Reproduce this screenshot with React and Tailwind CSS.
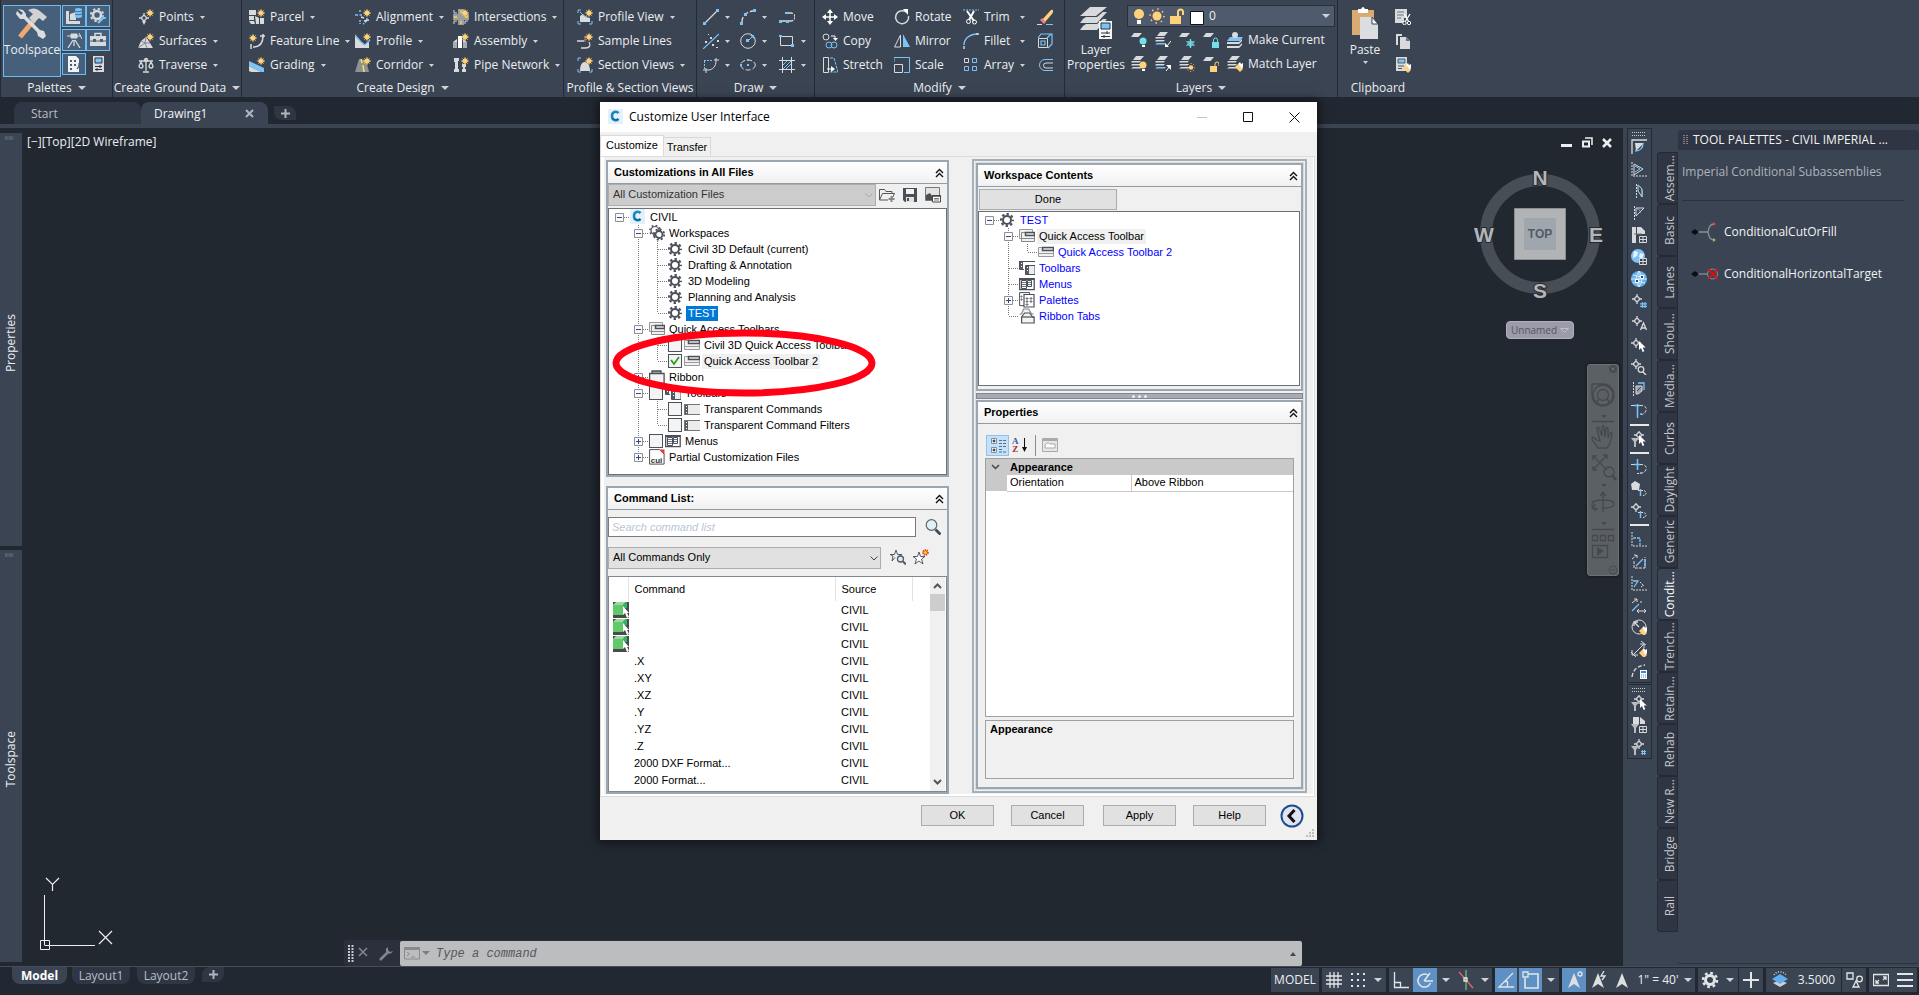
import React from "react";

const G = "#d9dadc";
const B = "#7cc4f8";
const Y = "#ffd27a";
const D = "#4b505a";

function Burst({ x = 12, y = 4 }) {
  return (
    <g transform={`translate(${x} ${y})`} fill={Y}>
      <path d="M0-4.5 1-1.8 3.2-3.2 1.8-1 4.5 0 1.8 1 3.2 3.2 1 1.8 0 4.5-1 1.8-3.2 3.2-1.8 1-4.5 0-1.8-1-3.2-3.2-1-1.8Z" />
    </g>
  );
}
const Cross = ({ x = 6, y = 6 }) => (
  <g transform={`translate(${x} ${y})`} stroke={G} fill="none" strokeWidth="1.3">
    <circle r="2.3" />
    <path d="M0-5v2.7M0 2.3V5M-5 0h2.7M2.3 0H5" />
  </g>
);
const Arrow = ({ x = 8, y = 5 }) => <path transform={`translate(${x} ${y})`} d="M0 0v9l2-2 1.6 4 1.7-.8L3.7 6.500h3Z" fill="#fff" />;
const Funnel = () => <path d="M0 7h8L5 11v5H3v-5Z" fill="#b9bbbf" />;
const Brush = ({ x = 8, y = 8 }) => (
  <g transform={`translate(${x} ${y})`}>
    <path d="M0 3 3 0l5 5-3 3Z" fill={Y} />
    <path d="M3 0 5-2l1 2 2-1v4L7 5Z" fill="#fff" />
  </g>
);
const Table = () => <path d="M8.500 9.500h7v6h-7zM12 9.500v6M8.500 12.500h7" stroke={G} fill="#3b4453" />;
const Sheet = ({ x, y, c = G }) => <path transform={`translate(${x} ${y})`} d="M3 0h8L7.500 4H0Z" fill={c} />;
const Stack = ({ mid = G }) => (
  <g>
    <Sheet x={2} y={0} />
    <path d="M1 5h9l-1.500 1.500H0ZM1 8h9L8.500 9.500H0Z" fill={G} />
    <path d="M2 11h9l-1.500 1.500H0Z" fill={mid} />
  </g>
);

const ICONS = {
  points: (<g><Cross x={6} y={9} /><path d="M4 12l2 4 2-4" fill={G} /><Burst /></g>),
  surfaces: (<g><path d="M0 15 3 8l5-4 4 6 3 5Z" fill={G} /><path d="m3 8 4 2 5 0M7 10l-7 5M7 10l2 5M8 4 7 10" stroke="#6d7480" fill="none" strokeWidth=".8" /><Burst /></g>),
  traverse: (<g fill="none" stroke={G} strokeWidth="1.300"><path d="M8 1v13M1 4h14M5 15h6" /><circle cx="8" cy="3" r="1.500" /><path d="M1 9l2-4 2 4a2 2 0 0 1-4 0ZM11 9l2-4 2 4a2 2 0 0 1-4 0Z" /></g>),
  parcel: (<g><path d="M0 1h7v5H0zM0 7h5v4H0zM6 7l4 2v6H7zM11 9h4v6h-4zM0 12h5l1 3H2z" fill={G} /><Burst /></g>),
  featureLine: (<g><path d="M14 3c0 7-3 11-10 11M11 3h5M2 11v5M14 1v4" stroke={G} fill="none" strokeWidth="1.500" /><Burst x={4} y={5} /></g>),
  grading: (<g><path d="M0 4 15 11v4H12L0 9Z" fill={B} /><path d="M0 9l12 6H2L0 14Z" fill={G} /><Burst /></g>),
  alignment: (<g fill="none" strokeWidth="1.500"><path d="M0 6h3M4.500 6H7" stroke={B} /><path d="M5 1v2M5 11v4M12 9c0 3-2 5-4 6" stroke={B} strokeDasharray="2 1" /><path d="M6 8l3 1M9 12l5-1" stroke={G} /><Burst /></g>),
  profile: (<g><path d="M0 3v12h14V9L9 12 5 8Z" fill={G} /><path d="m0 2 6 7 4 3 5-5" stroke={B} fill="none" strokeWidth="1.300" /><Burst /></g>),
  corridor: (<g><path d="M4 2 0 15h14L11 3Z" fill="#8e9196" /><path d="m6 2 1 4M8 8l1 7" stroke="#ffe24a" strokeWidth="1.500" /><Burst /></g>),
  intersections: (<g><path d="M5 0h6v5h5v6h-5v5H5v-5H0V5h5Z" fill="#9b9da1" /><path d="M8 1v3M8 12v3M1 8h3M12 8h3" stroke="#ffd83b" strokeWidth="1.300" /><path d="M1 1v3h3M12 15v-3h3M1 15v-3h3" stroke={G} fill="none" /><Burst /></g>),
  assembly: (<g><path d="M5 3h4v12H5z" fill="#fff" /><path d="M0 9h4v6H0zM10 9h4v6h-4z" fill="#a8abb0" /><path d="m0 9 4-3v3zM14 9l-4-3v3z" fill={G} /><Burst /></g>),
  pipe: (<g><path d="M1 1h5v3H5v8h1v3H1v-3h1V5H1ZM9 7h4v3h-1v2h1v3H9v-3h1v-2H9Z" fill={G} /><Burst /></g>),
  profileView: (<g><path d="M1 4V1h3M1 12v3h3M15 12v3h-3" stroke={B} fill="none" /><path d="M3 7 6 5l3 3 4 1v4H3Z" fill={G} /><path d="m3 3 4 4 3 1" stroke={B} fill="none" /><Burst /></g>),
  sampleLines: (<g><path d="M0 8h7M4 15h4c5 0 6-3 4-6" stroke={G} fill="none" strokeWidth="1.300" /><path d="M8 3v6" stroke="#ee8484" /><Burst /></g>),
  sectionViews: (<g><path d="M1 4V1h3M1 12v3h3M15 12v3h-3" stroke={B} fill="none" /><path d="M3 14c0-6 2-9 5-9s5 4 5 9Z" fill={G} /><Burst /></g>),
  line: (<g><path d="M2 14 14 2" stroke={G} strokeWidth="1.200" /><path d="M0 13h3v3H0zM13 0h3v3h-3z" fill={B} /></g>),
  arc: (<g><path d="M2 13C2 7 6 3 13 2" stroke={G} fill="none" strokeWidth="1.400" strokeDasharray="5 2" /><path d="M0 13h3v3H0zM4 4h3v3H4zM13 0h3v3h-3z" fill={B} /></g>),
  polyline: (<g><path d="M2 12h8M9 4h3a4 4 0 0 1 0 8h-2" stroke={G} fill="none" strokeWidth="1.300" strokeDasharray="5 1.500" /><path d="M0 11h3v3H0zM7 11h3v3H7zM6 3h3v2H6z" fill={B} /></g>),
  xline: (<g><path d="M0 16 16 1" stroke={B} strokeWidth="1.200" /><path d="M2 8h2v2H2zM7 4h2v2H7zM9 11h2v2H9zM14 7h2v2h-2zM5 1h1v1H5zM13 14h2v1h-2z" fill={G} /></g>),
  circle: (<g><circle cx="8" cy="8" r="7.300" stroke={G} fill="none" /><path d="m8 8 5-5" stroke={B} /><path d="M6 6h3v3H6zM10 2h4v4z" fill={B} /></g>),
  rect: (<g><path d="M1.500 3.500h12v9h-12z" stroke={G} fill="none" /><path d="M0 2h3v2H0zM12 11h3v3h-3z" fill={B} /></g>),
  curve: (<g fill="none"><path d="M1.500 4v9M1 3.500h9" stroke={B} strokeDasharray="2 1" /><path d="M13 1v3c0 5-3 9-8 9H0M11 3h5M3 11v5" stroke={G} /></g>),
  ellipse: (<g><ellipse cx="8" cy="8" rx="7.300" ry="5" stroke={G} fill="none" strokeDasharray="5 2" /><path d="M7 7h2v2H7zM0 7h2v2H0zM7 2h2v2H7z" fill={B} /></g>),
  hatch: (<g fill="none"><path d="M3.500 0v16M12.500 0v16M0 3.500h16M0 12.500h16" stroke={G} /><path d="m4 8 4-4M4 12l8-8M7 12l5-5" stroke={B} /></g>),
  move: (<g stroke="#fff" fill="#fff"><path d="M8 2v12M2 8h12" strokeWidth="1.500" /><path stroke="none" d="m8 0 3 4H5ZM8 16l3-4H5ZM0 8l4-3v6ZM16 8l-4-3v6Z" /></g>),
  copy: (<g fill="none"><circle cx="4" cy="4" r="3" stroke={G} /><circle cx="7" cy="12" r="3" stroke={B} /><circle cx="12" cy="12" r="3" stroke={B} /><path d="M9 3h4v3" stroke="#fff" /><path d="M11 5h5l-2.500 3Z" fill="#fff" /></g>),
  stretch: (<g fill="none"><path d="M1.500.5h5v15h-5z" stroke={G} /><path d="M8 1h4l4 14H8" stroke={B} strokeDasharray="3 1" /><path d="M5 12h5" stroke="#fff" /><path d="m9 9 4 3-4 3z" fill="#fff" /></g>),
  rotate: (<g fill="none"><path d="M12 3a6.500 6.500 0 1 0 2.500 4" stroke={G} strokeWidth="1.500" /><path d="M9 0h5v6z" fill="#fff" /></g>),
  mirror: (<g fill="none"><path d="M6.500 2v12h-6Z" stroke={G} /><path d="M9 1v13h7Z" fill={B} /></g>),
  scale: (<g fill="none"><path d="M0 5V.5h15.500v15H10" stroke={B} /><path d="M.5 7.500h8v8h-8z" stroke={G} /></g>),
  trim: (<g fill="none"><path d="M0 1h16" stroke={B} strokeDasharray="2 1" /><path d="m4 2 7 10M11 2 6 11" stroke="#fff" strokeWidth="2" /><circle cx="5.500" cy="12.500" r="2" stroke="#fff" /><circle cx="11.500" cy="13" r="2" stroke="#fff" /></g>),
  fillet: (<g fill="none"><path d="M15 1C6 1 1 6 1 12" stroke={B} strokeWidth="1.400" /><path d="M1 13v3M13 1h3" stroke={G} strokeWidth="1.400" /></g>),
  array: (<g fill="none"><path d="M1.500 1.500h4v4h-4z" stroke={G} /><path d="M9.500 1.500h4v4h-4zM1.500 9.500h4v4h-4zM9.500 9.500h4v4h-4z" stroke={B} /></g>),
  erase: (<g><path d="m5 11 8-9q2-2 3-1t-1 4l-7 8Z" fill={Y} /><path d="m3 11 2-2 4 4-2 2Z" fill="#ee7d86" /><path d="M0 15.500h5" stroke={G} /><path d="M9 15.500h7" stroke={B} /></g>),
  solid: (<g fill="none"><path d="M1.500 5.500h9v9h-9z" stroke={G} /><path d="m1 5 3-4h11v10l-4 4M10 5l4-4M4 8h4v4H4z" stroke={B} strokeWidth="1.200" /></g>),
  offset: (<g fill="none"><path d="M16 2.500H8a5.500 5.500 0 0 0 0 11h8" stroke={B} /><path d="M16 6H9a2.500 2.500 0 0 0 0 5h7" stroke={G} /></g>),
  layOff: (<g><Sheet x={0} y={1} /><circle cx="12" cy="9" r="3.500" fill="#74dfe8" /><path d="M11 13h3v2h-3z" fill="#fff" /></g>),
  layIso: (<g><Stack mid={B} /><path d="m16 9-4 5" stroke="#fff" /><path d="M10 15v-4l4 4z" fill="#fff" /></g>),
  layFreeze: (<g><Sheet x={0} y={1} /><path d="M11.500 7v9M7.500 9.500l8 4M15.500 9.500l-8 4" stroke="#74dfe8" strokeWidth="1.300" /><circle cx="11.500" cy="11.500" r="2.500" stroke="#74dfe8" fill="none" /></g>),
  layLock: (<g><Sheet x={0} y={1} /><path d="M9 10h7v6H9z" fill="#74dfe8" /><path d="M10.500 10V8a2 2 0 0 1 4 0v2" stroke="#74dfe8" fill="none" /></g>),
  layCurrent: (<g><path d="M3 5h13l-3 4H0Z" fill={B} /><circle cx="8" cy="3" r="3" fill={G} /><path d="M0 10h12l3-3v2l-3 3H0ZM0 14h12l3-3v2l-3 3H0Z" fill={G} /></g>),
  layOn: (<g><Stack /><circle cx="12" cy="9" r="3.500" fill={Y} /><path d="M11 13h3v2h-3z" fill="#fff" /></g>),
  layUniso: (<g><Stack mid={B} /><path d="m11 15 4-5" stroke="#fff" /><path d="M11 9h5v5z" fill="#fff" /></g>),
  layThaw: (<g><Stack /><circle cx="12" cy="11.500" r="2.300" fill={Y} /><circle cx="12" cy="11.500" r="4" stroke={Y} fill="none" strokeDasharray="1 2" /></g>),
  layUnlock: (<g><Sheet x={0} y={1} /><path d="M7 10h7v6H7z" fill={Y} /><path d="M12 10V8a2 2 0 0 1 4 0v2" stroke={Y} fill="none" /></g>),
  layMatch: (<g><Stack /><Brush x={8} y={8} /></g>),
  cut: (<g><path d="M0 0h12v9H9v5H0Z" fill={G} /><path d="M2 3h7M2 6h7M2 9h4" stroke="#6d7480" /><path d="m9 5 5 8M15 5l-5 8" stroke="#fff" strokeWidth="1.300" /><circle cx="9.500" cy="14" r="1.700" stroke="#fff" fill="#3b4453" /><circle cx="14" cy="14" r="1.700" stroke="#fff" fill="#3b4453" /></g>),
  copyDoc: (<g fill={G}><path d="M1 1h6v2H3v9H1Z" /><path d="M5 4h6l4 4v8H5Z" /><path d="M11 4v4h4Z" fill="#6d7480" /></g>),
  pasteSpecial: (<g><path d="M1 0h11v14H1Z" fill={G} /><path d="M3 2h7v4H3z" fill={B} stroke="#333" strokeWidth=".7" /><path d="M3 9h6M3 11.500h4" stroke="#555" /><Brush x={8} y={8} /></g>),
  prospector: (<g><path d="M0 3h3v10h11v3H0ZM4 6l6-2v8H4Z" fill={G} /><path d="M9 1q3-2 7 0v8q-4 2-7 0Z" fill={B} /><path d="M9 3q3 1.500 7 0M9 6q3 1.500 7 0" stroke="#3d6e96" fill="none" /></g>),
  settings: (<g><circle cx="7" cy="7" r="4" stroke={G} strokeWidth="2.500" fill="none" /><circle cx="7" cy="7" r="6.200" stroke={G} strokeWidth="1.800" strokeDasharray="2.400 2.470" fill="none" /><path d="m8 15 6-6" stroke={B} strokeWidth="2.300" /><path d="M12 7h2v2h2v1.500q-2 1-4-.5Z" fill={B} /></g>),
  survey: (<g stroke={G} fill="none"><path d="M7 8 2 16M9 8l5 8M8 8v6" strokeWidth="1.300" /><path d="M5 2h6v4H5z" fill={G} /><path d="M1 4h14M13 1l3 6" /></g>),
  toolbox: (<g><path d="M0 4h16v10H0z" fill={G} /><path d="M5 4V1.500h6V4" stroke={G} strokeWidth="1.500" fill="none" /><path d="M0 9h16" stroke="#46607b" /><path d="M3 7h3v3H3zM10 7h3v3h-3z" fill="#46607b" /></g>),
  panorama: (<g><path d="M2 0h8l3 3v13H2Z" fill="#f2f2f2" /><path d="M4 4h2v2H4zM8 4h2v2H8zM4 8h2v2H4zM8 8h2v2H8zM4 12h2v2H4z" fill="#46607b" /><path d="M13 7v3l-2 3" stroke="#46607b" fill="none" strokeWidth="1.300" /></g>),
  properties: (<g><path d="M3 0h11v16H3Z" fill={G} /><path d="M5 2h7v5H5z" fill={B} stroke="#2b3340" /><path d="M5 10.500h7M5 13.500h7M10 9v3M7 12v3" stroke="#2b3340" /></g>),
  // side toolbar
  s0: (<g fill="none"><path d="M1 15V1h15" stroke={G} strokeWidth="1.300" /><path d="M4 4h9l-8 8z" fill={G} /><path d="M12 4c0 5-3 8-8 8" stroke={B} strokeWidth="1.300" /></g>),
  s1: (<g fill="none"><path d="M1 1v14h15" stroke={G} strokeDasharray="2 1" /><path d="M3 3 12 8 3 14Z" stroke={G} /><path d="m4 5 5 3-5 3" stroke={B} /></g>),
  s2: (<g fill="none"><path d="M5.500 1v14" stroke={G} strokeDasharray="2 1" /><path d="m7 2 4 4v8L7 8Z" stroke={G} /><path d="M7 2c4 2 5 7 4 12" stroke={B} /></g>),
  s3: (<g fill="none"><path d="M3.500 1v14" stroke={G} strokeDasharray="2 1" /><path d="M5 3h8L5 11Z" stroke={G} /><path d="M6 4c2 0 4 2 3 4" stroke={B} /></g>),
  s4: (<g><path d="M1 0h4v16H1zM6 0h4l4 4v3H6z" fill={G} /><path d="M3 7h8" stroke="#6d7480" /><Table /></g>),
  s5: (<g><circle cx="7" cy="7" r="7" fill={B} /><path d="M3 2l4 1-1 4-4 2ZM9 4l4 1-2 5-3-2Z" fill="#e8f4ff" /><Table /></g>),
  s6: (<g><circle cx="8" cy="8" r="8" fill="#5fb4ee" /><path d="M8 0v16M0 8h16M2 4q6 3 12 0M2 12q6-3 12 0M8 0Q2 8 8 16Q14 8 8 0" stroke="#e8f4ff" strokeWidth=".8" fill="none" /><path d="M9.500 4.500h3v3h-3zM4.500 8.500h3v3h-3z" fill="#3b4453" stroke="#fff" /></g>),
  s7: (<g><Cross /><path d="M11.500 9v6M14 9v6M9 10.800h7M9 13.300h7" stroke={B} strokeWidth="1.200" /></g>),
  s8: (<g><Cross /><path d="m9.500 15 3-7 3 7M10.500 13h4" stroke={G} fill="none" strokeWidth="1.300" /></g>),
  s9: (<g><Cross x={5} y={6} /><Arrow x={8} y={4} /></g>),
  s10: (<g><Cross x={5} y={5} /><circle cx="10" cy="10.500" r="2.800" stroke={G} fill="none" strokeWidth="1.300" /><path d="m12 13 3 3" stroke={G} strokeWidth="1.500" /></g>),
  s11: (<g fill="none"><path d="M2.500 1v14" stroke={G} strokeDasharray="2 1" /><path d="M5 5h6v5l-4 3H5z" fill="#9a9ea6" stroke={G} /><path d="M7 2h6v7" stroke={B} strokeWidth="1.300" /><path d="m6 10 4-4" stroke="#3b4453" /></g>),
  s12: (<g fill="none"><path d="M0 2.500h10c4 0 6 2 5 5s-3 4-5 4" stroke={G} strokeDasharray="3 1.500" /><path d="M6.500 1v14M3 2.500h6M9 11h2" stroke={B} strokeWidth="1.500" /></g>),
  s13: (<g><Cross x={8} y={4} /><Funnel /><Arrow x={8} y={4} /></g>),
  s14: (<g fill="none"><path d="M0 5.500h10c4 0 6 2 5 5s-3 4-9 4" stroke={G} strokeDasharray="3 1.500" /><path d="M6.500 0v11M3 5.500h6M11 14h-2" stroke={B} strokeWidth="1.500" /></g>),
  s15: (<g fill="none"><path d="m4 0 5 3-1 6H1L0 3Z" fill={G} /><path d="M7 9.500h5c4 0 4 5 0 5" stroke={G} strokeDasharray="2 1" /><path d="M9.500 8v7" stroke={B} strokeWidth="1.500" /></g>),
  s16: (<g fill="none"><Cross x={5} y={4} /><path d="M7 9.500h5c4 0 4 5 0 5" stroke={G} strokeDasharray="2 1" /><path d="M9.500 8v7" stroke={B} strokeWidth="1.500" /></g>),
  s17: (<g fill="none"><path d="M1 1v14h15" stroke={G} strokeDasharray="2 1" /><path d="M2 7h7v7" stroke={B} strokeDasharray="3 1" strokeWidth="1.300" /></g>),
  s18: (<g fill="none"><path d="m1 6 5-4M6 5V2H3M3 8v7h11V4" stroke={G} strokeDasharray="3 1" /><path d="m5 13 7-7M14 6v8" stroke={B} strokeWidth="1.300" /></g>),
  s19: (<g fill="none"><path d="M1 1v14h15M9 7l4 4M10 12l3-2" stroke={G} strokeDasharray="2 1" /><path d="M2 6h5l-4 6" stroke={B} strokeWidth="1.300" /></g>),
  s20: (<g fill="none"><path d="m1 6 5-4M6 5V2H3M6 14h9M8 12l-2 2 2 2M13 12l2 2-2 2M10 4v2" stroke={G} /><path d="m1 14 7-7" stroke={B} strokeWidth="1.300" /></g>),
  s21: (<g fill="none"><circle cx="8" cy="8" r="7" stroke={G} /><path d="m8 8-4-4M3 7V3h4" stroke={G} strokeWidth="1.300" /><Brush x={8} y={9} /></g>),
  s22: (<g fill="none"><path d="m2 14 11-11M9 3h4v4M1 9v5h6M10 0l5 4M0 11l5 5" stroke={G} /><Brush x={8} y={9} /></g>),
  s23: (<g fill="none"><path d="M1 14C2 7 6 3 14 2" stroke={G} strokeDasharray="4 2" strokeWidth="1.400" /><path d="M9 7h7v9H9z" fill="#fff" /><path d="M10 8h5v2h-5z" fill="#2f8de0" /><path d="M10 12h5M10 14h5" stroke="#2f8de0" strokeDasharray="1 1" /></g>),
  s24: (<g><Cross x={8} y={4} /><Funnel /><Arrow x={9} y={4} /></g>),
  s25: (<g><path d="M2 0h6v7H2zM9 0l5 4v3H9z" fill={G} /><Funnel /><Table /></g>),
  s26: (<g><Cross x={8} y={5} /><Funnel /><path d="M11.500 11v5M13.500 11v5M10 12.500h5M10 14.500h5" stroke={B} /></g>),
  // dialog tree
  civil: (<g><path d="M0 0h15v15H0z" fill="#e3f1fa" /><path d="M10.500 4.200C8.500 1.800 4 2.500 4 7s4.500 5.200 6.500 2.800" stroke="#1f86bd" strokeWidth="2.600" fill="none" /><path d="M4.500 9.500q2 2.500 6 .8" stroke="#11597f" strokeWidth="1.200" fill="none" /></g>),
  gear: (<g fill="none" stroke={D}><circle cx="7" cy="8" r="4" strokeWidth="2" /><circle cx="7" cy="8" r="5.900" strokeWidth="2.200" strokeDasharray="2.400 2.230" strokeDashoffset="1.200" /></g>),
  gears: (<g fill="none" stroke={D}><circle cx="6" cy="5.500" r="4" strokeWidth="1.200" /><circle cx="6" cy="5.500" r="5.200" strokeWidth="1.500" strokeDasharray="1.700 2.380" /><circle cx="10" cy="9.500" r="3.500" strokeWidth="1.800" fill="#fff" /><circle cx="10" cy="9.500" r="5.200" strokeWidth="1.800" strokeDasharray="2.100 1.980" /></g>),
  qats: (<g fill="#f1f1f1" stroke={D} strokeWidth="1"><path d="M.5 1.500h13v9H.5z" stroke="#999" /><path d="M2.500 4.500h13v9h-13z" stroke="#888" /><path d="M6.500 4.500h9v3h-9z" fill="#e4e6e9" strokeWidth="1.500" /><path d="M3 10.500h12" stroke="#888" /></g>),
  qat: (<g fill="#f1f1f1" stroke={D} strokeWidth="1"><path d="M.5 3.500h15v9H.5z" stroke="#999" /><path d="M4.500 3.500h11v3h-11z" fill="#e4e6e9" strokeWidth="1.500" /><path d="M1 9.500h14" stroke="#999" /></g>),
  ribbon: (<g fill="#f3f3f3" stroke={D} strokeWidth="1.300"><path d="M.6 4.500h14.500v10H.6z" /><path d="M3 4V2h9v2" fill="#999" /></g>),
  toolbars: (<g><path d="M.5 1.500H16M.5 1v8.500H5" stroke={D} fill="none" /><path d="M1 2h3v8H1z" fill="#555b64" /><path d="M6.500 5.500H16v9H6.500z" fill="#ececec" stroke={D} /><path d="M7 6h3v8H7z" fill="#555b64" /><path d="M2 3h1v1H2zM2 6h1v1H2zM8 7h1v1H8zM8 10h1v1H8z" fill="#fff" /></g>),
  toolbar: (<g><path d="M.5 3.500H16M.5 13.500H16M.5 3v11" stroke="#777" fill="none" /><path d="M1 4h15v9H1z" fill="#ececec" /><path d="M1 4h3v9H1z" fill="#555b64" /><path d="M2 5h1v1H2zM2 8h1v1H2zM2 11h1v1H2z" fill="#fff" /></g>),
  menus: (<g fill="#fff" stroke={D}><path d="M.7 2.700h14.500v11H.7z" strokeWidth="1.300" /><path d="M.5 3h15" strokeWidth="2" /><path d="M2.500 4.500h5v8h-5zM8.500 4.500h4v6h-4z" /><path d="M3 6.500h4M3 8.500h4M3 10.500h4M9 6.500h3M9 8.500h3" strokeWidth=".8" /></g>),
  palettes: (<g fill="#fff" stroke={D}><path d="M.6.600h10v13H.6z" /><path d="M5 2.500h10v12.500H5z" strokeWidth="1.200" /><path d="M7 6h2v1H7zM11 6h2v1h-2zM7 9h2v1H7zM11 9h2v1h-2zM7 12h2v1H7zM2 4h1v1H2zM2 7h1v1H2z" strokeWidth=".8" /></g>),
  ribbonTabs: (<g fill="#f3f3f3" stroke={D} strokeWidth="1.200"><path d="M.6 6h2l2-5h5l3 5h2" stroke="#888" /><path d="M2.600 9l3-4h5l3 4h1.500v6H2.600z" /><path d="M2.600 9h12.500" /></g>),
  cui: (<g><path d="M.6.600h10l4.500 4.500v10H.6z" fill="#fff" stroke={D} /><path d="M10 .5 15.500 6V.5z" fill="#e23d45" /><text x="7.500" y="13.500" fontSize="8" fontWeight="bold" textAnchor="middle" fill="#333" fontFamily="Liberation Sans">cui</text></g>),
  openAdd: (<g fill="none" stroke="#555"><path d="M.5 13V2.500h5l1.500 2h6V7M.5 13l3-6.500h12l-2 4M.5 13H9" /><path d="M12.500 9v6M9.500 12h6" stroke="#888" strokeWidth="2" /></g>),
  save: (<g><path d="M1 1h14v14H3l-2-2z" fill="#4a4e55" /><path d="M4 2h8v5H4z" fill="#f2f2f2" /><path d="M4 10h8v5H4z" fill="#e2e2e2" /><path d="M5 11h2v3H5z" fill="#4a4e55" /></g>),
  image: (<g><path d="M.5.500h14v13H.5z" fill="#e3e3e3" stroke="#777" /><path d="M1 8l4-2 2 3v4H1z" fill="#4a4e55" /><path d="M7.500 8.500h8v6.500h-8z" fill="#fff" stroke="#444" /><path d="M7 9h9" stroke="#444" strokeWidth="1.500" /><path d="M9 11.500h5M9 13h5" stroke="#555" strokeWidth=".8" /></g>),
  search: (<g><circle cx="6.500" cy="6" r="5.300" fill="#e2f1f5" stroke="#5a6a72" strokeWidth="1.200" /><path d="m10.500 10.500 5 5" stroke="#444b52" strokeWidth="2.800" /></g>),
  starFind: (<g fill="none" stroke="#555b66"><path d="m6 1 1.500 4.500H12L8.500 8M5 8.500 2 12l1-5L0 5.500h4.500L6 1" /><circle cx="10.500" cy="10" r="3" fill="#dfeef2" strokeWidth="1.300" /><path d="m13 12.500 3 3" strokeWidth="2" /></g>),
  starNew: (<g fill="none" stroke="#555b66"><path d="m6 3 1.500 4.500H12L8.500 10l1.500 5-4-3-4 3 1.500-5L0 7.500h4.500z" fill="#fff" /><circle cx="12.500" cy="3.500" r="2.300" stroke="#d9480f" strokeWidth="2" strokeDasharray="1.200 .6" fill="#ffcf33" /></g>),
  cmd: (<g><path d="M0 0h16v16H0z" fill="#4a4a4c" /><path d="M0 3h10v10H0z" fill="#5fca67" /><path d="M0 3 3 0h10l-3 3z" fill="#9bd99f" /><path d="m10 3 3-3h1v6h-4z" fill="#2fb56a" /><path d="M10 4v9l2-2 2 5 2-1-2-4h2z" fill="#fff" /></g>),
  categorized: (<g stroke="#30589a" fill="#fff"><path d="M1.500 1.500h5v5h-5zM1.500 10.500h5v5h-5z" stroke="#7a8fae" /><path d="M4 2.500v3M2.500 4h3M4 11.500v3M2.500 13h3" stroke="#111" /><path d="M9 3.500h3M9 6.500h3M9 9.500h3M9 12.500h3M9 15h3M13 3.500h3M13 6.500h3M13 9.500h3M13 15h3" stroke="#5a6f8f" /></g>),
  pages: (<g fill="#e6e6e6" stroke="#a9a9a9"><path d="M.5 1.500h15v13H.5z" /><path d="M.5 3h15" strokeWidth="2" /><path d="M3 11V8l2-2h2l1 1h5v4z" fill="#fff" /></g>),
};

function Icon({ n, s = 16 }) {
  return (
    <svg width={s} height={s} viewBox="0 0 16 16" className="shrink-0" aria-hidden="true">
      {ICONS[n]}
    </svg>
  );
}

function Caret({ w = 5, className = "" }) {
  return (
    <svg width={w} height={w === 5 ? 3 : 4} viewBox="0 0 8 4" className={`shrink-0 ${className}`} preserveAspectRatio="none" aria-hidden="true">
      <path d="M0 0h8L4 4Z" fill="#cfd2d6" />
    </svg>
  );
}

function Tool({ icon, label, caret, className = "" }) {
  return (
    <button className={`flex h-6 items-center whitespace-nowrap ${className}`} aria-label={label || icon}>
      <Icon n={icon} />
      {label && <span className="ml-[5px]">{label}</span>}
      {caret && <Caret className="ml-[6px]" />}
    </button>
  );
}

function Panel({ title, caret, className, children }) {
  return (
    <section className={`flex flex-none flex-col border-r border-[#252b35] pt-[5px] ${className}`}>
      <div className="flex h-[72px]">{children}</div>
      <h2 className="flex flex-1 items-center justify-center gap-[6px] whitespace-nowrap pt-[2px] font-normal">
        {title}
        {caret && <Caret w={8} />}
      </h2>
    </section>
  );
}

const Col = ({ className = "", children }) => <div className={`flex flex-col ${className}`}>{children}</div>;

function PaletteButton({ icon, on }) {
  return (
    <button aria-label={icon} className={`flex h-[22px] w-6 items-center justify-center border ${on ? "border-[#6cbcf5] bg-[#46607b]" : "border-transparent"}`}>
      <Icon n={icon} />
    </button>
  );
}

function Ribbon() {
  return (
    <header className="flex h-[97px] flex-none overflow-hidden border-l border-[#252b35] bg-[#3b4453] text-[12px] text-[#eceef0]">
      <Panel title="Palettes" caret className="w-[112px]">
        <button className="ml-[2px] flex h-[72px] w-[58px] flex-col items-center border border-[#6cbcf5] bg-[#46607b]">
          <svg width="34" height="34" viewBox="0 0 34 34">
            <path d="m5 31 14-17" stroke="#f2a970" strokeWidth="5" />
            <path d="M13 4q7-4 13 2l6 5-4 4-4-3-5 5-5-5 4-4Z" fill="#d0d2d4" />
            <path d="M3 3l5 1 3 4 0 2 14 14 4 1 2 5-3 3-5-3-1-4L9 13 5 13 1 8l1-3 4 4 2-2Z" fill="#dcdddf" />
          </svg>
          <span className="mt-px">Toolspace</span>
        </button>
        <div className="ml-px grid h-[70px] grid-cols-2 content-between">
          <PaletteButton icon="prospector" on />
          <PaletteButton icon="settings" on />
          <PaletteButton icon="survey" on />
          <PaletteButton icon="toolbox" on />
          <PaletteButton icon="panorama" on />
          <PaletteButton icon="properties" />
        </div>
      </Panel>
      <Panel title="Create Ground Data" caret className="w-[129px]">
        <Col className="pl-[25px]">
          <Tool icon="points" label="Points" caret />
          <Tool icon="surfaces" label="Surfaces" caret />
          <Tool icon="traverse" label="Traverse" caret />
        </Col>
      </Panel>
      <Panel title="Create Design" caret className="w-[322px]">
        <Col className="w-[106px] flex-none pl-[7px]">
          <Tool icon="parcel" label="Parcel" caret />
          <Tool icon="featureLine" label="Feature Line" caret />
          <Tool icon="grading" label="Grading" caret />
        </Col>
        <Col className="w-[98px] flex-none pl-[7px]">
          <Tool icon="alignment" label="Alignment" caret />
          <Tool icon="profile" label="Profile" caret />
          <Tool icon="corridor" label="Corridor" caret />
        </Col>
        <Col className="pl-[7px]">
          <Tool icon="intersections" label="Intersections" caret />
          <Tool icon="assembly" label="Assembly" caret />
          <Tool icon="pipe" label="Pipe Network" caret />
        </Col>
      </Panel>
      <Panel title="Profile & Section Views" className="w-[133px]">
        <Col className="pl-[13px]">
          <Tool icon="profileView" label="Profile View" caret />
          <Tool icon="sampleLines" label="Sample Lines" />
          <Tool icon="sectionViews" label="Section Views" caret />
        </Col>
      </Panel>
      <Panel title="Draw" caret className="w-[118px]">
        <Col className="w-[36px] flex-none pl-[6px]">
          <Tool icon="line" caret />
          <Tool icon="xline" caret />
          <Tool icon="curve" caret />
        </Col>
        <Col className="w-[40px] flex-none pl-[7px]">
          <Tool icon="arc" caret />
          <Tool icon="circle" caret />
          <Tool icon="ellipse" caret />
        </Col>
        <Col className="pl-[6px]">
          <Tool icon="polyline" />
          <Tool icon="rect" caret />
          <Tool icon="hatch" caret />
        </Col>
      </Panel>
      <Panel title="Modify" caret className="w-[250px]">
        <Col className="w-[72px] flex-none pl-[7px]">
          <Tool icon="move" label="Move" />
          <Tool icon="copy" label="Copy" />
          <Tool icon="stretch" label="Stretch" />
        </Col>
        <Col className="w-[70px] flex-none pl-[7px]">
          <Tool icon="rotate" label="Rotate" />
          <Tool icon="mirror" label="Mirror" />
          <Tool icon="scale" label="Scale" />
        </Col>
        <div className="flex w-[73px] flex-none pl-[6px]">
          <Col>
            <Tool icon="trim" label="Trim" />
            <Tool icon="fillet" label="Fillet" />
            <Tool icon="array" label="Array" />
          </Col>
          <Col className="ml-[6px]">
            {["Trim", "Fillet", "Array"].map((t) => (
              <button key={t} aria-label={`${t} options`} className="flex h-6 items-center"><Caret /></button>
            ))}
          </Col>
        </div>
        <Col className="pl-[7px]">
          <Tool icon="erase" />
          <Tool icon="solid" />
          <Tool icon="offset" />
        </Col>
      </Panel>
      <Panel title="Layers" caret className="w-[273px]">
        <button className="flex w-[62px] flex-none flex-col items-center pt-px leading-[15px]">
          <svg width="34" height="34" viewBox="0 0 34 34">
            <path d="M11 1h17L17 10H1Z" fill={G} />
            <path d="m4 13 3-2h11l6-5h4L18 17H1ZM4 20l3-2h11l6-5h4L18 24H1Z" fill={G} />
            <path d="M20 15h13v18H20Z" fill="#f5f5f5" />
            <path d="M22 17h9v6h-9z" fill={B} stroke="#2b3340" />
            <path d="M22 27h9M22 30.500h9M28 25v3M25 29v3" stroke="#2b3340" />
          </svg>
          <span className="mt-[2px]">Layer</span>
          <span>Properties</span>
        </button>
        <div className="flex flex-1 flex-col pr-[2px]">
          <button className="flex h-[22px] items-center border border-[#2a303b] bg-[#4f5a6d] pl-[6px] pr-1" aria-label="Layer control">
            <svg width="70" height="18" viewBox="0 0 70 18">
              <circle cx="5" cy="7" r="5" fill={Y} />
              <path d="M3 13h4v4H3z" fill="#fff" />
              <circle cx="23" cy="9" r="4.500" fill={Y} />
              <circle cx="23" cy="9" r="7" fill="none" stroke={Y} strokeWidth="1.500" strokeDasharray="1.500 4" />
              <path d="M36 9h11v8H36z" fill={Y} />
              <path d="M44 9V5a2.500 2.500 0 0 1 5 0v3" stroke={Y} strokeWidth="2" fill="none" />
              <path d="M56.500 4.500h13v13h-13z" fill="#fff" stroke="#111" />
            </svg>
            <span className="ml-[5px] flex-1 text-left">0</span>
            <Caret w={8} />
          </button>
          <div className="mt-px flex h-6 items-center gap-2 pl-1">
            <Icon n="layOff" /><Icon n="layIso" /><Icon n="layFreeze" /><Icon n="layLock" /><Tool icon="layCurrent" label="Make Current" />
          </div>
          <div className="flex h-6 items-center gap-2 pl-1">
            <Icon n="layOn" /><Icon n="layUniso" /><Icon n="layThaw" /><Icon n="layUnlock" /><Tool icon="layMatch" label="Match Layer" />
          </div>
        </div>
      </Panel>
      <section className="flex flex-none flex-col pt-[5px]">
        <div className="flex h-[72px]">
          <button className="flex w-[54px] flex-col items-center pt-px leading-[15px]">
            <svg width="28" height="34" viewBox="0 0 28 34">
              <path d="M1 4h22v25H1Z" fill="#d9ab72" />
              <path d="M7 3h3q2-4 4 0h3v4H7Z" fill="#fff" />
              <path d="M9 11h12l6 7v15H9Z" fill="#dcdddf" />
              <path d="M21 11v7h6Z" fill="#fff" stroke="#3b4453" />
            </svg>
            <span className="mt-[2px]">Paste</span>
            <Caret className="mt-1" />
          </button>
          <Col className="pl-[3px]">
            <Tool icon="cut" /><Tool icon="copyDoc" /><Tool icon="pasteSpecial" />
          </Col>
        </div>
        <h2 className="flex flex-1 items-center justify-center pl-[7px] pt-[2px] font-normal">Clipboard</h2>
      </section>
    </header>
  );
}

function FileTabs() {
  return (
    <nav className="flex h-[27px] flex-none items-end bg-[#222831] pl-[14px] text-[12px]">
      <button className="flex h-[22px] w-[127px] items-center rounded-t-[8px] bg-[#2f3744] pl-[17px] pt-px text-[#b9bec5]">Start</button>
      <div className="flex h-[22px] w-[127px] items-center rounded-t-[8px] bg-[#3b4453] pl-[13px] pt-px text-[#f2f3f5]">
        <button>Drawing1</button>
        <button aria-label="Close Drawing1" className="ml-auto mr-[14px]">
          <svg width="9" height="9" viewBox="0 0 9 9"><path d="m1 1 7 7M8 1 1 8" stroke="#b2b6bc" strokeWidth="2" /></svg>
        </button>
      </div>
      <button aria-label="New drawing" className="mb-1 ml-[6px] flex h-[14px] w-[22px] items-center justify-center rounded-bl-lg rounded-tr-lg bg-[#2f3744]">
        <svg width="9" height="9" viewBox="0 0 9 9"><path d="M4.500 0v9M0 4.500h9" stroke="#b2b6bc" strokeWidth="2" /></svg>
      </button>
    </nav>
  );
}

const Grip = ({ className = "" }) => (
  <svg width="14" height="4" viewBox="0 0 14 4" className={className} aria-hidden="true">
    <path d="M0 .5h14M0 3.500h14" stroke="#c6c9ce" strokeDasharray="1 1" />
  </svg>
);

function SideBars() {
  return (
    <aside className="flex w-[22px] flex-none flex-col gap-1 bg-[#222831] pb-1 pt-[5px] text-[12px] text-[#eceef0]">
      {["Properties", "Toolspace"].map((t) => (
        <div key={t} className="flex flex-1 flex-col items-center bg-[#3b4453] pt-[3px]">
          <Grip className="-ml-1 w-[9px]" />
          <div className="flex flex-1 items-center">
            <span className="rotate-180 [writing-mode:vertical-rl]">{t}</span>
          </div>
        </div>
      ))}
    </aside>
  );
}

function ViewCube() {
  return (
    <svg width="132" height="134" viewBox="0 0 132 134" className="absolute right-[17px] top-[39px]" aria-label="View cube">
      <circle cx="66" cy="67" r="54" stroke="#484e55" strokeWidth="12" fill="none" />
      <g fill="#b3b5b7" fontFamily="Liberation Sans" fontWeight="bold" fontSize="21" textAnchor="middle" stroke="#222831" strokeWidth="2" paintOrder="stroke">
        <text x="66" y="18">N</text>
        <text x="66" y="131">S</text>
        <text x="10" y="75">W</text>
        <text x="122" y="75">E</text>
      </g>
      <path d="M40.500 41.500h51v51h-51z" fill="#b1b3b4" stroke="#8c8f92" />
      <path d="M50 51h32v32H50z" fill="#9fa6ae" />
      <text x="66" y="71" fontFamily="Liberation Sans" fontWeight="bold" fontSize="12" textAnchor="middle" fill="#555b64">TOP</text>
    </svg>
  );
}

function NavBar() {
  const p = { fill: "none", stroke: "#45494d", strokeWidth: 1.3 };
  return (
    <div className="absolute right-1 top-[236px] flex w-8 flex-col items-center rounded-[3px] border border-[#6c7074] bg-[#5b6064] shadow-[0_0_3px_#111]">
      <svg width="30" height="210" viewBox="0 0 30 210" aria-label="Navigation bar">
        <circle cx="25" cy="4" r="4" fill="#484c50" />
        <path d="m23.500 2.500 3 3m0-3-3 3" stroke="#6c7074" />
        <g {...p}>
          <path d="M4 29V19h11a11 11 0 1 1-11 10Z" />
          <circle cx="15" cy="30" r="10" />
          <circle cx="15" cy="30" r="5.500" />
          <path d="m11 34-3 4M19 34l3 4M4 56.500h22M4 164.500h22" />
          <path d="M9 75 5 72q-2 1 0 4l5 7h9q4-5 5-14 0-3-2-1l-2 5 0-9q-1-3-2 0l-1 8-1-10q-1-2-2 0v9l-3-8q-2-2-2 1l3 12Z" />
          <path d="m5 91 14 14M19 90 5 105M5 95v-4h4M15 90h4v4M5 101v4h4" />
          <circle cx="21" cy="107" r="5" />
          <path d="m24 110 4 5" strokeWidth="2.500" />
          <path d="M15 129v18M12 131l3-4 3 4M10 144q-6-1-6-5 0-4 11-4t11 4q0 4-12 4M8 139l-4 4 4 3" />
          <path d="M4.500 170.500h5v5h-5zM12.500 170.500h5v5h-5zM20.500 170.500h5v5h-5zM4.500 180.500h15v12h-15z" />
        </g>
        <path d="M13 50h6l-3 3zM13 119h6l-3 3zM13 157h6l-3 3zM9 182l7 4-7 5z" fill="#45494d" />
        <circle cx="25" cy="205" r="4" fill="none" stroke="#484c50" />
        <path d="M23 205h4" stroke="#484c50" />
      </svg>
    </div>
  );
}

function CommandLine() {
  return (
    <div className="absolute bottom-0 left-[322px] right-[321px] flex h-[26px] rounded-[3px] bg-[#2b303c]">
      <div className="flex w-[56px] items-center">
        <svg width="6" height="17" viewBox="0 0 6 17" className="ml-1"><path d="M1 0v17M4.500 0v17" stroke="#c6c9ce" strokeWidth="2" strokeDasharray="2 1" /></svg>
        <svg width="36" height="16" viewBox="0 0 36 16" className="ml-1">
          <path d="m1 3 8 8M9 3l-8 8" stroke="#83878d" strokeWidth="1.600" />
          <path d="m22 15 8-8" stroke="#83878d" strokeWidth="2.500" />
          <path d="M30 2q-4 2-1 6 4 2 6-2l-3 1-2-2z" fill="#83878d" />
        </svg>
      </div>
      <label className="mt-px flex flex-1 items-center rounded-[2px] bg-[#bcbdbf] pl-1 pr-[6px]">
        <svg width="26" height="13" viewBox="0 0 26 13">
          <path d="M.5.500h15v11.500H.5z" fill="none" stroke="#888a8d" />
          <path d="M0 1.500h16" stroke="#888a8d" strokeWidth="3" />
          <path d="m3 5 2.500 2L3 9M7 10h4" stroke="#888a8d" fill="none" />
          <path d="M18 4h8l-4 4z" fill="#7b7d80" />
        </svg>
        <input aria-label="Command" placeholder="Type a command" className="ml-[6px] min-w-0 flex-1 bg-transparent font-['Liberation_Mono',monospace] text-[12px] italic placeholder-[#55585c] outline-none" />
        <svg width="6" height="4" viewBox="0 0 6 4"><path d="M0 4h6L3 0Z" fill="#45494f" /></svg>
      </label>
    </div>
  );
}

function Canvas() {
  return (
    <main className="relative min-w-0 flex-1 bg-[#212830] text-[12px] text-[#eceef0]">
      <p className="pl-[5px] pt-[5px] leading-[18px]">[−][Top][2D Wireframe]</p>
      <svg width="52" height="12" viewBox="0 0 52 12" className="absolute right-[10px] top-[9px]" aria-hidden="true">
        <path d="M0 8.500h11" stroke="#eee" strokeWidth="3" />
        <path d="M22 4.500h6v5h-6z" stroke="#eee" strokeWidth="2" fill="none" />
        <path d="M24 1h7v7" stroke="#eee" strokeWidth="1.500" fill="none" />
        <path d="m42 2 8 8M50 2l-8 8" stroke="#eee" strokeWidth="2.500" />
      </svg>
      <ViewCube />
      <button className="absolute right-[49px] top-[193px] flex h-[18px] w-[68px] items-center justify-between rounded-[4px] border border-[#b0b0bc] bg-[#9b9ba9] px-1 text-[10px] text-[#555762]">
        Unnamed
        <svg width="9" height="5" viewBox="0 0 9 5"><path d="M.5.500h8l-4 4Z" fill="none" stroke="#bfc0ca" /></svg>
      </button>
      <NavBar />
      <svg width="76" height="76" viewBox="0 0 76 76" className="absolute bottom-[14px] left-[16px]" fill="none" stroke="#eceef0" aria-hidden="true">
        <path d="M2.500 64.500h9v9h-9zM6.500 19v50M6.500 69.500H57" />
        <path d="m8 2 6.500 6.500L21 2M14.500 8.500V15M61 55l13 13M74 55 61 68" strokeWidth="1.200" />
      </svg>
      <CommandLine />
    </main>
  );
}

function ToolStrip({ groups }) {
  return (
    <div className="flex w-[25px] flex-col items-center border border-[#252b35] pr-px pt-[3px]">
      <Grip />
      {groups.map((g, i) => (
        <div key={g[0]} className="flex w-full flex-col items-center">
          {i > 0 && <div className="flex h-[6px] w-full items-center pl-[2px] pr-px"><div className="h-[2px] w-full bg-[#e8e8e8]" /></div>}
          {g.map((n) => (
            <button key={n} aria-label={`Tool ${n}`} className="flex h-[22px] items-center"><Icon n={"s" + n} /></button>
          ))}
        </div>
      ))}
    </div>
  );
}

const PALETTE_TABS = ["Assem...", "Basic", "Lanes", "Shoul...", "Media...", "Curbs", "Daylight", "Generic", "Condit...", "Trench...", "Retain...", "Rehab", "New R...", "Bridge", "Rail"];

function RightDock() {
  return (
    <aside className="flex w-[296px] flex-none bg-[#3b4453] pl-1 text-[12px]">
      <div className="flex w-[25px] flex-col gap-px">
        <ToolStrip groups={[[0, 1, 2, 3, 4, 5, 6, 7, 8, 9, 10, 11, 12], [13], [14, 15, 16], [17, 18, 19, 20, 21, 22, 23]]} />
        <ToolStrip groups={[[24, 25, 26]]} />
      </div>
      <div className="ml-[5px] flex w-[21px] flex-col pt-6" role="tablist">
        {PALETTE_TABS.map((t) => (
          <button
            key={t}
            role="tab"
            aria-selected={t === "Condit..."}
            className={`flex h-[52px] items-center justify-center rounded-l-[3px] border border-[#252b35] pl-1 ${t === "Condit..." ? "border-r-0 text-white" : "bg-[#2f3542] text-[#c3c7cc]"}`}
          >
            <span className="rotate-180 whitespace-nowrap [writing-mode:vertical-rl]">{t}</span>
          </button>
        ))}
      </div>
      <div className="flex min-w-0 flex-1 flex-col pt-[2px]">
        <h2 className="flex h-5 items-center whitespace-nowrap rounded-t-[4px] bg-[#2f3542] pl-[5px] font-normal text-[#f2f3f5]">
          <svg width="5" height="10" viewBox="0 0 5 10" className="mr-[5px]"><path d="M1 0v10M4 0v10" stroke="#c6c9ce" strokeDasharray="1 1" /></svg>
          TOOL PALETTES - CIVIL IMPERIAL ...
        </h2>
        <div className="mr-px flex flex-1 flex-col rounded-b-[3px] border-b border-[#2b313c] pl-1">
          <h3 className="mr-[14px] h-[51px] border-b border-[#2b313c] pt-[13px] font-normal leading-[18px] text-[#aeb3bb]">Imperial Conditional Subassemblies</h3>
          <button className="mt-5 flex h-[22px] items-center pl-2 text-[#f2f3f5]">
            <svg width="29" height="22" viewBox="0 0 29 22" className="mr-[5px]" fill="none">
              <path d="M8 11h10c1-5 2-8 6-8M18 11c1 5 2 8 6 8" stroke="#8b8f95" strokeWidth="1.300" />
              <path d="m1 11 4-3 4 3-4 3Z" fill="#0c0d10" /><path d="m23 1 3 2-3 2z" fill="#e44" /><path d="m23 17 3 2-3 2z" fill="#8fbf6a" />
            </svg>
            ConditionalCutOrFill
          </button>
          <button className="mt-5 flex h-[22px] items-center pl-2 text-[#f2f3f5]">
            <svg width="29" height="22" viewBox="0 0 29 22" className="mr-[5px]" fill="none">
              <path d="M8 11h9" stroke="#8b8f95" strokeWidth="1.300" />
              <circle cx="22.500" cy="11" r="5" stroke="#8b8f95" /><path d="m1 11 4-3 4 3-4 3Z" fill="#0c0d10" /><path d="m18 6 10 10M28 6 18 16" stroke="#f00" strokeWidth="1.500" />
            </svg>
            ConditionalHorizontalTarget
          </button>
        </div>
        <div className="h-[2px]" />
      </div>
    </aside>
  );
}

/* ---------- dialog ---------- */

// one character per 19px column: " " empty, "|" through line, "T" branch, "L" last branch
// "+" / "-" expander on a branch, lower-case "m" / "p" expander on the last branch, "r" root expander
function Guide({ k }) {
  const exp = "+-mpr".includes(k);
  const last = "Lmp".includes(k);
  return (
    <svg width="19" height="16" viewBox="0 0 19 16" className="shrink-0" aria-hidden="true">
      {k !== " " && k !== "r" && <path d={last ? "M9.500 0v8" : "M9.500 0v16"} stroke="#777" strokeDasharray="1 1" />}
      {k !== " " && k !== "|" && <path d="M10 8.500h9" stroke="#777" strokeDasharray="1 1" />}
      {exp && (
        <g>
          <path d="M5.500 4.500h8v8h-8z" fill="#fafafa" stroke="#8e8f8f" />
          <path d="M7 8.500h5" stroke="#30479a" />
          {(k === "+" || k === "p") && <path d="M9.500 6v5" stroke="#30479a" />}
        </g>
      )}
    </svg>
  );
}

function TreeRow({ guides, icon, label, check, tone = "" }) {
  return (
    <li className="flex h-4 items-center whitespace-nowrap">
      {guides.split("").map((k, i) => <Guide key={i} k={k} />)}
      <label className="flex items-center">
        {check !== undefined && (
          <span className="relative ml-px mr-px flex">
            <input type="checkbox" defaultChecked={check} className="size-[14px] appearance-none border border-[#4d525a] bg-[#f4f4f4]" />
            {check && <svg width="12" height="12" viewBox="0 0 12 12" className="pointer-events-none absolute left-px top-px"><path d="m2 5 3 4 5-7" stroke="#2e9e1f" strokeWidth="1.800" fill="none" /></svg>}
          </span>
        )}
        <span className="ml-px flex"><Icon n={icon} /></span>
        <span className={`ml-[2px] px-[2px] leading-[15px] ${tone}`}>{label}</span>
      </label>
    </li>
  );
}

const LEFT_TREE = [
  { guides: "r", icon: "civil", label: "CIVIL" },
  { guides: " -", icon: "gears", label: "Workspaces" },
  { guides: " |T", icon: "gear", label: "Civil 3D Default (current)" },
  { guides: " |T", icon: "gear", label: "Drafting & Annotation" },
  { guides: " |T", icon: "gear", label: "3D Modeling" },
  { guides: " |T", icon: "gear", label: "Planning and Analysis" },
  { guides: " |L", icon: "gear", label: "TEST", tone: "bg-[#0078d7] text-white" },
  { guides: " -", icon: "qats", label: "Quick Access Toolbars" },
  { guides: " |T", icon: "qat", label: "Civil 3D Quick Access Toolbar", check: false },
  { guides: " |L", icon: "qat", label: "Quick Access Toolbar 2", check: true, tone: "bg-[#f0f0f0]" },
  { guides: " +", icon: "ribbon", label: "Ribbon" },
  { guides: " -", icon: "toolbars", label: "Toolbars", check: false },
  { guides: " |T", icon: "toolbar", label: "Transparent Commands", check: false },
  { guides: " |L", icon: "toolbar", label: "Transparent Command Filters", check: false },
  { guides: " +", icon: "menus", label: "Menus", check: false },
  { guides: " p", icon: "cui", label: "Partial Customization Files" },
];

const RIGHT_TREE = [
  { guides: "r", icon: "gear", label: "TEST", tone: "text-[#0000ff]" },
  { guides: " -", icon: "qats", label: "Quick Access Toolbar", tone: "bg-[#f0f0f0]" },
  { guides: " |L", icon: "qat", label: "Quick Access Toolbar 2", tone: "text-[#0000ff]" },
  { guides: " T", icon: "toolbars", label: "Toolbars", tone: "text-[#0000ff]" },
  { guides: " T", icon: "menus", label: "Menus", tone: "text-[#0000ff]" },
  { guides: " +", icon: "palettes", label: "Palettes", tone: "text-[#0000ff]" },
  { guides: " L", icon: "ribbonTabs", label: "Ribbon Tabs", tone: "text-[#0000ff]" },
];

const COMMANDS = [
  ["", true], ["", true], ["", true], [".X"], [".XY"], [".XZ"], [".Y"], [".YZ"], [".Z"], ["2000 DXF Format..."], ["2000 Format..."],
];

function Group({ title, className = "", children }) {
  return (
    <section className={`flex flex-col border-2 border-[#9aa6b0] bg-[#f0f0f0] ${className}`}>
      <header className="flex h-[22px] flex-none items-center justify-between border-b border-[#8f9ba5] bg-gradient-to-b from-white to-[#f1f1f1] pb-px pl-[6px] pr-[3px]">
        <h3 className="font-bold">{title}</h3>
        <button aria-label={`Collapse ${title}`} className="pt-[2px]">
          <svg width="9" height="10" viewBox="0 0 9 10"><path d="m1 5 3.500-3.500L8 5M1 9l3.500-3.500L8 9" stroke="#111" strokeWidth="1.400" fill="none" /></svg>
        </button>
      </header>
      {children}
    </section>
  );
}

function Drop({ label, value, className, chevron }) {
  return (
    <div className={`relative ${className}`}>
      <select aria-label={label} defaultValue={value} className="h-full w-full appearance-none border border-[#adadad] bg-transparent pb-px pl-1 outline-none">
        <option>{value}</option>
      </select>
      <svg width="8" height="5" viewBox="0 0 8 5" className="pointer-events-none absolute right-[3px] top-[9px]"><path d="m.5.500 3.500 3.500L7.500.500" fill="none" stroke={chevron} /></svg>
    </div>
  );
}

const DialogButton = ({ children, className = "" }) => (
  <button className={`h-[21px] border border-[#adadad] bg-[#e1e1e1] ${className}`}>{children}</button>
);

function Dialog() {
  return (
    <div role="dialog" aria-label="Customize User Interface" className="absolute left-[600px] top-[102px] flex w-[717px] flex-col bg-[#f0f0f0] font-['Liberation_Sans',Arial,sans-serif] text-[11px] text-black shadow-[0_0_10px_2px_rgba(0,0,0,0.55)]">
      <header className="flex h-[30px] items-center bg-white pl-2 font-['Open_Sans',sans-serif] text-[12px]">
        <Icon n="civil" />
        <h1 className="ml-[5px] flex-1 font-normal">Customize User Interface</h1>
        <button aria-label="Minimize" className="flex w-[46px] justify-center"><svg width="10" height="10" viewBox="0 0 10 10"><path d="M0 5.500h10" stroke="#c4c4c4" /></svg></button>
        <button aria-label="Maximize" className="flex w-[46px] justify-center"><svg width="10" height="10" viewBox="0 0 10 10"><path d="M.5.500h9v9h-9z" fill="none" stroke="#111" /></svg></button>
        <button aria-label="Close" className="flex w-[46px] justify-center"><svg width="11" height="11" viewBox="0 0 11 11"><path d="m.5.500 10 10M10.500.500l-10 10" stroke="#111" /></svg></button>
      </header>
      <div className="flex h-6 items-end" role="tablist">
        <button role="tab" aria-selected="true" className="-mb-px h-[22px] w-16 border border-b-0 border-[#d9d9d9] bg-white pb-[2px]">Customize</button>
        <button role="tab" aria-selected="false" className="h-[19px] w-[47px] border border-b-0 border-l-0 border-[#d9d9d9] pt-px">Transfer</button>
      </div>
      <div className="mr-[2px] border border-[#dcdcdc] bg-white pb-[2px] pl-[3px] pr-px">
        <div className="flex justify-between bg-[#f0f0f0] pl-[2px] pr-[6px] pt-[2px]">
          <div className="flex w-[343px] flex-col gap-[9px] pt-px">
            <Group title="Customizations in All Files" className="h-[317px]">
              <div className="flex h-6 flex-none items-start">
                <Drop label="Customization files" value="All Customization Files" className="h-[22px] w-[268px] bg-[#cccccc] text-[#333]" chevron="#aaa" />
                <div className="ml-[3px] flex h-[22px] items-center gap-[7px]">
                  <button aria-label="Load file"><Icon n="openAdd" /></button>
                  <button aria-label="Save"><Icon n="save" /></button>
                  <button aria-label="Image manager"><Icon n="image" /></button>
                </div>
              </div>
              <ul className="flex-1 border border-[#6b7076] bg-white pl-px">
                {LEFT_TREE.map((r) => <TreeRow key={r.label} {...r} />)}
              </ul>
            </Group>
            <Group title="Command List:" className="h-[308px]">
              <div className="mt-[7px] flex items-center">
                <input aria-label="Search command list" placeholder="Search command list" className="h-5 w-[308px] border border-[#7a7a7a] bg-white pl-[3px] italic placeholder-[#b9c6d4] outline-none" />
                <button aria-label="Search" className="ml-[9px]"><Icon n="search" /></button>
              </div>
              <div className="mt-[10px] flex items-center">
                <Drop label="Command filter" value="All Commands Only" className="h-[22px] w-[273px] bg-[#e1e1e1]" chevron="#444" />
                <div className="flex gap-[7px] pb-[2px] pl-[9px]">
                  <button aria-label="Find in favorites"><Icon n="starFind" /></button>
                  <button aria-label="Add to favorites"><Icon n="starNew" /></button>
                </div>
              </div>
              <div className="mt-[7px] flex min-h-0 flex-1 items-start overflow-hidden border border-[#828790] bg-white pr-px">
                <table className="w-[303px] table-fixed">
                  <colgroup><col className="w-[19px]" /><col className="w-[207px]" /><col className="w-[77px]" /></colgroup>
                  <thead>
                    <tr className="h-[24px] text-left">
                      <th className="border-r border-[#e2e2e2]" aria-label="Image" />
                      <th className="border-r border-[#e2e2e2] pl-[6px] font-normal">Command</th>
                      <th className="border-r border-[#e2e2e2] pl-[6px] font-normal">Source</th>
                    </tr>
                  </thead>
                  <tbody>
                    {COMMANDS.map(([name, img], i) => (
                      <tr key={i} className="h-[17px] leading-[16px]">
                        <td className="pl-1">{img && <Icon n="cmd" />}</td>
                        <td className="pl-[6px]">{name}</td>
                        <td className="pl-[6px]">CIVIL</td>
                      </tr>
                    ))}
                  </tbody>
                </table>
                <div className="ml-auto flex h-full w-[15px] flex-col items-center bg-[#f0f0f0]">
                  <svg width="9" height="17" viewBox="0 0 9 17"><path d="m1 11 3.500-3.500L8 11" stroke="#555" strokeWidth="2" fill="none" /></svg>
                  <div className="h-[17px] w-full bg-[#cdcdcd]" />
                  <svg width="9" height="17" viewBox="0 0 9 17" className="mt-auto"><path d="m1 6 3.500 3.500L8 6" stroke="#555" strokeWidth="2" fill="none" /></svg>
                </div>
              </div>
            </Group>
          </div>

          <div className="flex w-[335px] flex-col self-start border-2 border-[#a5b0b9] p-px">
            <div className="flex flex-col border border-[#d8dde1]">
              <Group title="Workspace Contents" className="h-[228px]">
                <DialogButton className="mb-px ml-px mt-[2px] w-[138px] flex-none">Done</DialogButton>
                <ul className="mb-[3px] mr-px flex-1 border border-[#6b7076] bg-white pl-px">
                  {RIGHT_TREE.map((r) => <TreeRow key={r.label} {...r} />)}
                </ul>
              </Group>
              <div className="mb-px mt-[2px] flex h-[6px] items-center justify-center gap-[3px] border border-[#83858f] bg-[#a9aab8]">
                <i className="size-[3px] rounded-full bg-[#eee]" /><i className="size-[3px] rounded-full bg-[#eee]" /><i className="size-[3px] rounded-full bg-[#eee]" />
              </div>
              <Group title="Properties" className="h-[389px]">
                <div className="mt-[10px] flex h-[22px] items-center pl-[8px]">
                  <button aria-label="Categorized" className="flex h-[21px] w-[23px] items-center justify-center border border-[#8fc3ee] bg-[#c4e1f7]"><Icon n="categorized" /></button>
                  <button aria-label="Alphabetical" className="ml-[3px] flex items-center">
                    <span className="flex flex-col font-['Liberation_Serif',serif] text-[9px] font-bold leading-[8px]"><span className="text-[#3553a4]">A</span><span className="text-[#9c2a35]">Z</span></span>
                    <svg width="7" height="16" viewBox="0 0 7 16" className="ml-[2px]"><path d="M3.500 1v11" stroke="#111" /><path d="M1 10h5l-2.500 5z" fill="#111" /></svg>
                  </button>
                  <span className="ml-[7px] h-[21px] w-px bg-[#8c8c8c]" />
                  <button aria-label="Property pages" className="ml-[6px]" disabled><Icon n="pages" /></button>
                </div>
                <div className="mx-[7px] mt-[2px] flex-1 border border-[#a0a0a0] bg-white">
                  <table className="w-full table-fixed">
                    <colgroup><col className="w-[21px]" /><col className="w-[124px]" /><col /></colgroup>
                    <tbody>
                      <tr className="h-[16px] bg-[#c9c9c9]">
                        <td className="pl-[5px]"><svg width="9" height="6" viewBox="0 0 9 6"><path d="M1 1l3.500 3.500L8 1" stroke="#444" strokeWidth="1.500" fill="none" /></svg></td>
                        <th colSpan={2} className="pl-[3px] text-left leading-[15px]">Appearance</th>
                      </tr>
                      <tr className="h-[16px]">
                        <td className="bg-[#c9c9c9]" />
                        <td className="border-b border-r border-[#c9c9c9] pl-[3px] leading-[15px]">Orientation</td>
                        <td className="border-b border-[#c9c9c9] pl-[3px] leading-[15px]">Above Ribbon</td>
                      </tr>
                    </tbody>
                  </table>
                </div>
                <div className="mx-[7px] mb-2 mt-[3px] h-[59px] border border-[#a0a0a0] px-1 font-bold">Appearance</div>
              </Group>
            </div>
          </div>
        </div>
      </div>
      <footer className="flex h-[43px] items-start justify-end pr-[13px] pt-2">
        <DialogButton className="w-[73px]">OK</DialogButton>
        <DialogButton className="ml-[17px] w-[73px]">Cancel</DialogButton>
        <DialogButton className="ml-[19px] w-[73px]">Apply</DialogButton>
        <DialogButton className="ml-[17px] w-[73px]">Help</DialogButton>
        <button aria-label="Less options" className="ml-[14px]">
          <svg width="24" height="24" viewBox="0 0 24 24" className="-mt-px"><circle cx="12" cy="12" r="10.500" fill="#dfe3f2" stroke="#1f4f8a" strokeWidth="2" /><path d="m14.500 6-5.500 6 5.500 6" stroke="#111" strokeWidth="3" fill="none" /></svg>
        </button>
      </footer>
      <svg width="9" height="9" viewBox="0 0 9 9" className="absolute bottom-[2px] right-[2px]" aria-hidden="true"><path d="M6 0h2v2H6zM3 3h2v2H3zM6 3h2v2H6zM0 6h2v2H0zM3 6h2v2H3zM6 6h2v2H6z" fill="#bfbfbf" /></svg>
      <svg width="264" height="70" viewBox="0 0 264 70" className="pointer-events-none absolute left-3 top-[226px]" aria-hidden="true">
        <ellipse cx="132" cy="35" rx="128" ry="30" fill="none" stroke="#ff0015" strokeWidth="7" />
      </svg>
    </div>
  );
}

/* ---------- status bar ---------- */

const Cell = ({ label, on, className = "w-6", children }) => (
  <button aria-label={label} className={`flex h-6 items-center justify-center ${on ? "bg-[#5f90c4]" : ""} ${className}`}>{children}</button>
);
const Box = ({ children }) => <div className="flex bg-[#3b4453]">{children}</div>;
const S = ({ w = 20, children }) => <svg width={w} height="20" viewBox={`0 0 ${w} 20`} fill="none" stroke="#e4e5e7" strokeWidth="1.300" aria-hidden="true">{children}</svg>;
const Person = () => <path d="M9 3 3 18l6-4 6 4Z" fill="#dedfe1" stroke="none" />;

function StatusBar() {
  return (
    <footer className="flex h-[29px] flex-none items-start justify-between border-t border-[#484e57] bg-[#222831] text-[12px] text-[#eceef0]">
      <nav className="flex pl-3">
        <button className="h-[17px] w-[55px] rounded-b-[8px] bg-[#3b4453] font-bold leading-[17px] text-white">Model</button>
        <button className="ml-[5px] h-[17px] w-[58px] rounded-b-[8px] bg-[#2f3744] leading-[17px] text-[#b9bec5]">Layout1</button>
        <button className="ml-[7px] h-[17px] w-[58px] rounded-b-[8px] bg-[#2f3744] leading-[17px] text-[#b9bec5]">Layout2</button>
        <button aria-label="New layout" className="ml-[7px] flex h-[15px] w-[22px] items-center justify-center rounded-br-lg rounded-tl-lg bg-[#2f3744]">
          <svg width="9" height="9" viewBox="0 0 9 9"><path d="M4.500 0v9M0 4.500h9" stroke="#b2b6bc" strokeWidth="2" /></svg>
        </button>
      </nav>
      <div className="flex gap-[3px] pr-[2px] pt-px">
        <Box><Cell label="Model space" className="w-[48px]">MODEL</Cell></Box>
        <Box>
          <Cell label="Grid"><S w={16}><path d="M4 2v16M8 2v16M12 2v16M0 6h16M0 10h16M0 14h16" /></S></Cell>
          <Cell label="Snap"><S w={14}><path d="M0 4h14M0 10h14M0 16h14" strokeDasharray="2 4" strokeWidth="2" /></S></Cell>
          <Cell label="Snap options" className="w-4"><Caret w={8} /></Cell>
        </Box>
        <Box>
          <Cell label="Ortho"><S w={18}><path d="M2.500 2v15.500H17M3 12.500h5.500v5" /></S></Cell>
          <Cell label="Polar" on><S><path d="M15.500 13a6.500 6.500 0 1 1-2-7.500M9 11l6-8M9 11h9" strokeWidth="1.500" /></S></Cell>
          <Cell label="Polar options" className="w-[17px]"><Caret w={8} /></Cell>
          <Cell label="Isodraft" className="w-[23px]"><S><path d="m3 2 14 16" stroke="#e86464" /><path d="M10 0v20" stroke="#67c476" /><path d="M8 8h3v3H8z" /></S></Cell>
          <Cell label="Isodraft options" className="w-[15px]"><Caret w={8} /></Cell>
        </Box>
        <Box>
          <Cell label="Tracking" on className="w-[22px]"><S w={18}><path d="M17 17H2L16 3M7.500 11.500h3v5" /></S></Cell>
          <Cell label="Object snap" on className="ml-[2px] w-[23px]"><S w={18}><path d="M6 4h10v14H3V8" strokeWidth="1.600" /><path d="M1 2h5v5H1z" /></S></Cell>
          <Cell label="Object snap options" className="w-[17px]"><Caret w={8} /></Cell>
        </Box>
        <Box>
          <Cell label="Annotation visibility" on><S w={18}><Person /><circle cx="15" cy="4" r="2" /></S></Cell>
          <Cell label="Auto scale"><S w={18}><Person /><path d="m15 1-3 5h4l-3 4" /></S></Cell>
          <Cell label="Annotation"><S w={18}><Person /></S></Cell>
          <Cell label="Annotation scale" className="w-[61px] gap-[5px] whitespace-nowrap">1" = 40'<Caret w={8} /></Cell>
        </Box>
        <Box>
          <Cell label="Workspace"><S w={18}><circle cx="9" cy="10" r="4.500" strokeWidth="3" /><circle cx="9" cy="10" r="7" strokeWidth="2.500" strokeDasharray="2.750 2.750" /></S></Cell>
          <Cell label="Workspace options" className="w-4"><Caret w={8} /></Cell>
          <Cell label="Add" className="w-[25px] border-l border-[#222831]"><S w={16}><path d="M8 2v16M0 10h16" strokeWidth="2" /></S></Cell>
        </Box>
        <Box>
          <Cell label="Elevation" className="w-[75px] gap-[10px]">
            <S w={16}><path d="m1 13 7 4 7-4-7-3z" fill="#d0d1d3" stroke="none" /><path d="m0 9 8-5 8 5-8 5z" fill="#62aef0" stroke="none" /><path d="M2 5a6.500 5 0 0 1 12 0" strokeDasharray="1 1.500" /></S>
            3.5000
          </Cell>
          <Cell label="Isolate objects" className="w-[25px] border-l border-[#222831]"><S w={17}><path d="M1 3h6v6H1zM7 17l3-6 3 6z" /><circle cx="13.500" cy="9" r="2.800" /></S></Cell>
        </Box>
        <Box>
          <Cell label="Clean screen"><S w={16}><path d="M.5 4.500h15v11H.5z" /><path d="m3 13 3-3M3 10v3h3M13 7l-3 3M10 7h3v3" /></S></Cell>
          <Cell label="Customization"><S w={16}><path d="M0 4h16M0 10h16M0 16h16" strokeWidth="2" /></S></Cell>
        </Box>
      </div>
    </footer>
  );
}

export default function App() {
  return (
    <div className="relative flex h-screen flex-col overflow-hidden bg-[#222831] font-['Open_Sans',sans-serif]">
      <Ribbon />
      <FileTabs />
      <div className="h-1 flex-none bg-[#3b4453]" />
      <div className="flex min-h-0 flex-1">
        <SideBars />
        <Canvas />
        <RightDock />
      </div>
      <StatusBar />
      <Dialog />
    </div>
  );
}
